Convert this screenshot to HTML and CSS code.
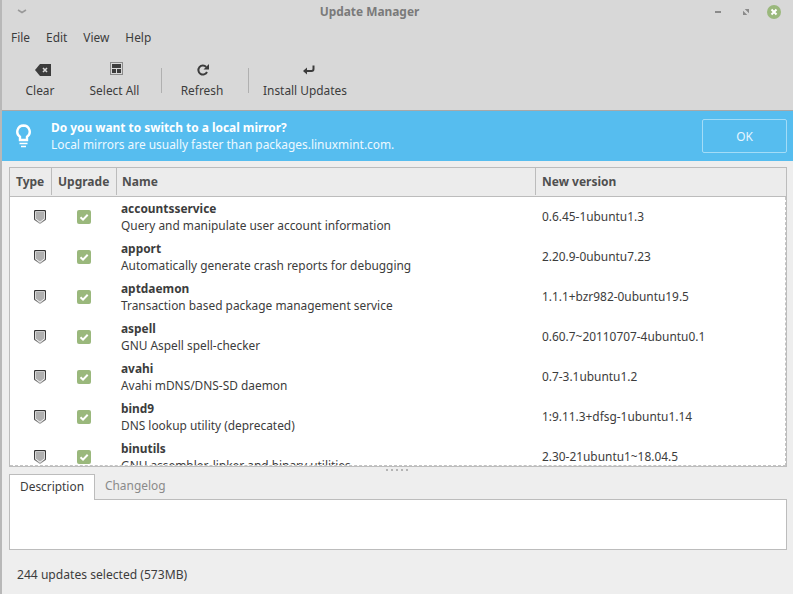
FILE: index.html
```html
<!DOCTYPE html>
<html lang="en">
<head>
<meta charset="utf-8">
<title>Update Manager</title>
<link rel="stylesheet" href="styles.css">
</head>
<body>
<svg class="defs" width="0" height="0" aria-hidden="true">
  <defs>
    <linearGradient id="shield-edge" x1="0" y1="0" x2="0" y2="1">
      <stop offset="0" stop-color="#333"/>
      <stop offset=".6" stop-color="#444"/>
      <stop offset="1" stop-color="#aaa"/>
    </linearGradient>
  </defs>
  <symbol id="shield" viewBox="0 0 12 14">
    <path d="M.6 1.200Q.6.600 1.200.600h9.600q.6 0 .6.600v8.300L6 13.400.6 9.500z" fill="#fff" stroke="url(#shield-edge)" stroke-width="1.200"/>
    <path d="M2 2h8v6.800L6 11.700 2 8.800z" fill="#b0b0b0"/>
  </symbol>
  <symbol id="check" viewBox="0 0 14 14">
    <rect width="14" height="14" rx="2" fill="#9ab87c"/>
    <path d="M3.500 7.300l2.500 2.400 4.700-5" fill="none" stroke="#fff" stroke-width="2"/>
  </symbol>
</svg>
<div class="window">
  <header class="titlebar">
    <svg class="tb-menu" width="10" height="5" viewBox="0 0 10 5"><path d="M1 1l4 2.500L9 1" fill="none" stroke="#999" stroke-width="1.500"/></svg>
    <div class="title">Update Manager</div>
    <div class="wm">
      <span class="wm-min"></span>
      <svg class="wm-max" width="6" height="6" viewBox="0 0 7 7"><path d="M2 0h5v5zM0 2l5 5H0z" fill="#8a8a8a"/></svg>
      <svg class="wm-close" width="14" height="14" viewBox="0 0 14 14"><circle cx="7" cy="7" r="7" fill="#9ab87c"/><path d="M4.500 4.500l5 5M9.500 4.500l-5 5" stroke="#fff" stroke-width="2"/></svg>
    </div>
  </header>
  <nav class="menubar"><span>File</span><span>Edit</span><span>View</span><span>Help</span></nav>
  <div class="toolbar">
    <div class="tool t-clear">
      <svg width="16" height="12" viewBox="0 0 16 12"><path d="M5 0h11v12H5L0 6z" fill="#3c3c3c"/><path d="M8 4l4 4M12 4l-4 4" stroke="#d8d8d8" stroke-width="1.600"/></svg>
      <span>Clear</span>
    </div>
    <div class="tool t-select">
      <svg width="13" height="13" viewBox="0 0 13 13"><rect x=".5" y=".5" width="12" height="12" fill="none" stroke="#3c3c3c" stroke-dasharray="1 1"/><path d="M2 2h9v4H2zM2 7h4v4H2zM7 7h4v4H7z" fill="#3c3c3c"/></svg>
      <span>Select All</span>
    </div>
    <i class="sep"></i>
    <div class="tool t-refresh">
      <svg width="14" height="14" viewBox="0 0 14 14"><path d="M11 9a4.500 4.500 0 1 1-.8-5" fill="none" stroke="#3c3c3c" stroke-width="2"/><path d="M13 1v5.500H7.500z" fill="#3c3c3c"/></svg>
      <span>Refresh</span>
    </div>
    <i class="sep"></i>
    <div class="tool t-install">
      <svg width="12" height="12" viewBox="0 0 12 12"><path d="M10.500 1.500v3.500a2 2 0 0 1-2 2H3" fill="none" stroke="#3c3c3c" stroke-width="2"/><path d="M0 7l4-3.500v7z" fill="#3c3c3c"/></svg>
      <span>Install Updates</span>
    </div>
  </div>
  <div class="infobar">
    <svg class="bulb" width="15" height="25" viewBox="0 0 15 25"><path d="M7.500 1.500a6.200 6.200 0 0 0-3.500 11.300V16h7v-3.200A6.200 6.200 0 0 0 7.500 1.500z" fill="none" stroke="#fff" stroke-width="2.400"/><path d="M3.500 19.500h8M5 22.500h5" stroke="#fff" stroke-width="1.500"/></svg>
    <div class="info-text">
      <div class="info-head">Do you want to switch to a local mirror?</div>
      <div>Local mirrors are usually faster than packages.linuxmint.com.</div>
    </div>
    <div class="ok">OK</div>
  </div>
  <main class="content">
    <section class="tree">
      <div class="tree-head">
        <div class="c-type">Type</div><div class="c-up">Upgrade</div><div class="c-name">Name</div><div class="c-ver">New version</div>
      </div>
      <div class="tree-body">
        <div class="row"><div class="c-type"><svg class="ic-s"><use href="#shield"/></svg></div><div class="c-up"><svg class="ic-c"><use href="#check"/></svg></div><div class="c-name"><b>accountsservice</b><span>Query and manipulate user account information</span></div><div class="c-ver">0.6.45-1ubuntu1.3</div></div>
        <div class="row"><div class="c-type"><svg class="ic-s"><use href="#shield"/></svg></div><div class="c-up"><svg class="ic-c"><use href="#check"/></svg></div><div class="c-name"><b>apport</b><span>Automatically generate crash reports for debugging</span></div><div class="c-ver">2.20.9-0ubuntu7.23</div></div>
        <div class="row"><div class="c-type"><svg class="ic-s"><use href="#shield"/></svg></div><div class="c-up"><svg class="ic-c"><use href="#check"/></svg></div><div class="c-name"><b>aptdaemon</b><span>Transaction based package management service</span></div><div class="c-ver">1.1.1+bzr982-0ubuntu19.5</div></div>
        <div class="row"><div class="c-type"><svg class="ic-s"><use href="#shield"/></svg></div><div class="c-up"><svg class="ic-c"><use href="#check"/></svg></div><div class="c-name"><b>aspell</b><span>GNU Aspell spell-checker</span></div><div class="c-ver">0.60.7~20110707-4ubuntu0.1</div></div>
        <div class="row"><div class="c-type"><svg class="ic-s"><use href="#shield"/></svg></div><div class="c-up"><svg class="ic-c"><use href="#check"/></svg></div><div class="c-name"><b>avahi</b><span>Avahi mDNS/DNS-SD daemon</span></div><div class="c-ver">0.7-3.1ubuntu1.2</div></div>
        <div class="row"><div class="c-type"><svg class="ic-s"><use href="#shield"/></svg></div><div class="c-up"><svg class="ic-c"><use href="#check"/></svg></div><div class="c-name"><b>bind9</b><span>DNS lookup utility (deprecated)</span></div><div class="c-ver">1:9.11.3+dfsg-1ubuntu1.14</div></div>
        <div class="row"><div class="c-type"><svg class="ic-s"><use href="#shield"/></svg></div><div class="c-up"><svg class="ic-c"><use href="#check"/></svg></div><div class="c-name"><b>binutils</b><span>GNU assembler, linker and binary utilities</span></div><div class="c-ver">2.30-21ubuntu1~18.04.5</div></div>
      </div>
    </section>
    <div class="grip"><i></i><i></i><i></i><i></i><i></i></div>
    <div class="tabs"><div class="tab active">Description</div><div class="tab">Changelog</div></div>
    <div class="pane"></div>
    <footer class="status">244 updates selected (573MB)</footer>
  </main>
</div>
</body>
</html>
```
FILE: styles.css
```css
* { box-sizing: border-box; }
html, body { margin: 0; height: 100%; }
body { font: 11.9px/17px "Noto Sans", sans-serif; color: #3c3c3c; overflow: hidden; background: #eee; }
.defs { position: absolute; }
.window { width: 793px; height: 594px; display: flex; flex-direction: column; border-left: 2px solid #b8b8b8; }

.titlebar { height: 23px; flex: none; background: #d8d8d8; display: flex; align-items: center; position: relative; }
.tb-menu { margin: 0 0 0 15px; }
.title { position: absolute; left: 0; right: 56px; text-align: center; font-weight: 700; color: #7a7a7a; top: 3px; }
.wm { margin-left: auto; display: flex; align-items: center; height: 14px; margin-right: 12px; }
.wm-min { width: 6px; height: 2px; background: #8a8a8a; margin-right: 22px; }
.wm-max { margin-right: 18px; }

.menubar { height: 28px; flex: none; background: #d8d8d8; display: flex; align-items: center; padding: 0 0 0 9px; gap: 16px; color: #3c3c3c; }

.toolbar { height: 60px; flex: none; background: #d8d8d8; display: flex; border-bottom: 1px solid #a8a8a8; padding-top: 12px; }
.tool { display: flex; flex-direction: column; align-items: center; height: 40px; }
.tool svg { height: 14px; margin-bottom: 5px; }
.t-clear { width: 76px; }
.t-clear svg { margin-left: 6px; }
.t-select { width: 73px; margin-right: 10px; }
.t-select svg { height: 13px; margin: -1px 0 7px 4px; }
.t-refresh { width: 70px; margin-right: 11px; }
.t-refresh svg { margin-left: 2px; }
.t-install { width: 100px; margin-left: 1px; }
.t-install svg { margin-left: 8px; }
.sep { width: 1px; height: 25px; background: #b0b0b0; margin: 5px 5px 0 0; }

.infobar { height: 50px; flex: none; background: #56bdef; color: #fff; display: flex; align-items: center; padding: 0 6px 0 14px; }
.bulb { margin-right: 20px; }
.info-text { flex: 1; line-height: 17px; color: #eef9ff; }
.info-head { font-weight: 700; color: #fff; }
.ok { width: 85px; height: 34px; border: 1px solid #a3dcf7; border-radius: 2px; text-align: center; line-height: 32px; color: #e6f6ff; }

.content { flex: 1; min-height: 0; display: flex; flex-direction: column; padding: 6px 6px 0 7px; background: #eee; }
.tree { height: 300px; flex: none; border: 1px solid #bcbcbc; background: #fff; display: flex; flex-direction: column; overflow: hidden; }
.tree-head { height: 29px; flex: none; display: flex; background: #ececec; border-bottom: 1px solid #bcbcbc; font-size: 12px; font-weight: 700; color: #505050; padding-bottom: 1px; }
.tree-head > div { display: flex; align-items: center; padding-left: 6px; border-right: 1px solid #bcbcbc; }
.tree-head > .c-name { padding-left: 5px; }
.tree-head > .c-ver { border-right: 0; }
.c-type { width: 42px; flex: none; }
.c-up { width: 65px; flex: none; }
.c-name { width: 419px; flex: none; }
.c-ver { flex: 1; }
.tree-body { flex: 1; min-height: 0; overflow: hidden; position: relative; border: 1px dashed #c4c4c4; border-width: 0 1px 1px 0; }
.row { height: 40px; display: flex; color: #3c3c3c; }
.row .c-type { display: flex; align-items: center; padding-left: 24px; }
.row .c-up { display: flex; align-items: center; padding-left: 25px; }
.row .c-name { padding: 3px 0 0 4px; display: flex; flex-direction: column; }
.row .c-name b { font-weight: 700; }
.row .c-ver { padding: 11px 0 0 6px; }
.ic-s { width: 12px; height: 14px; }
.ic-c { width: 14px; height: 14px; }

.grip { height: 7px; flex: none; display: flex; justify-content: center; gap: 3px; padding-top: 2px; margin-right: 2px; }
.grip i { width: 2px; height: 2px; background: #b4b4b4; }

.tabs { height: 25px; flex: none; display: flex; }
.tab { padding: 3px 10px 0 10px; color: #8a8a8a; }
.tab.active { background: #fff; color: #3c3c3c; border: 1px solid #bcbcbc; border-bottom: 0; width: 86px; padding: 3px 0 0 10px; position: relative; z-index: 1; height: 26px; }
.pane { height: 51px; flex: none; background: #fff; border: 1px solid #bcbcbc; }
.status { padding: 16px 0 0 8px; font-size: 12.1px; color: #3c3c3c; }
```
